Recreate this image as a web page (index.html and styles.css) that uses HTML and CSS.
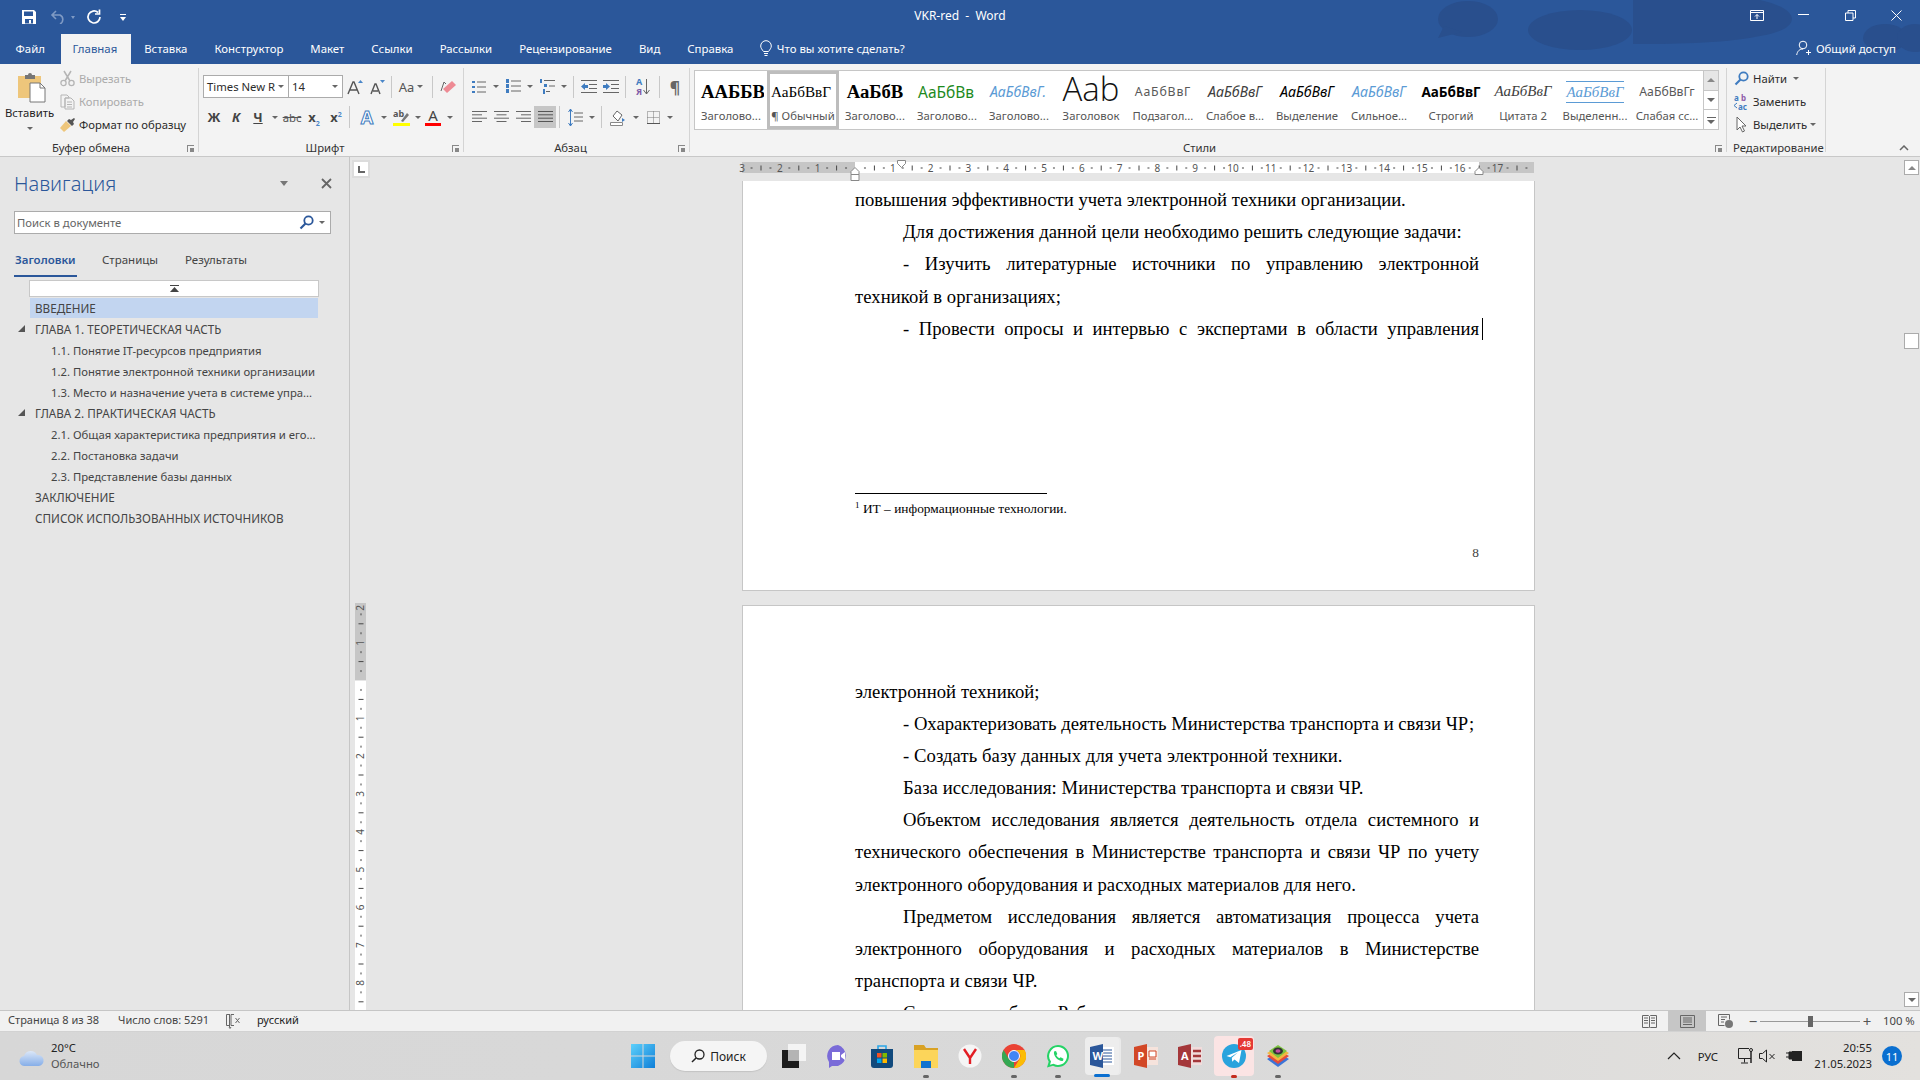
FILE: index.html
```html
<!DOCTYPE html>
<html lang="ru">
<head>
<meta charset="utf-8">
<title>VKR-red - Word</title>
<link rel="stylesheet" href="styles.css">
</head>
<body>
<div class="app">
  <header class="header">
    <svg class="art" width="500" height="54" viewBox="0 0 500 54"><g fill="#294f8d"><ellipse cx="48" cy="19" rx="30" ry="18"/><path d="M24 26l-6 12 24-6z"/><ellipse cx="160" cy="30" rx="52" ry="20"/><path d="M213 0H340C385 10 380 30 340 36 300 44 250 44 213 44z"/><ellipse cx="465" cy="38" rx="22" ry="14"/><ellipse cx="495" cy="38" rx="18" ry="14"/></g></svg>
    <div class="titlebar">
      <div class="qat">
        <svg class="q-save" width="16" height="16" viewBox="0 0 16 16"><path d="M1 1h12l2 2v12H1z" fill="#fff"/><path d="M3 2.500h9v4.500H3zM4 10h8v4.500H4z" fill="#2b579a"/><path d="M8 11h2v3.500H8z" fill="#fff"/></svg>
        <svg class="q-undo" width="18" height="14" viewBox="0 0 18 14"><path d="M6 1L2 5l4 4M2 5h8a5 5 0 0 1 0 9" fill="none" stroke="#7f9ac4" stroke-width="1.6"/></svg>
        <span class="q-dd"></span>
        <svg class="q-redo" width="16" height="16" viewBox="0 0 16 16"><path d="M12 3.500A6 6 0 1 0 14 8M13.500 .5v4.500H9" fill="none" stroke="#fff" stroke-width="1.700"/></svg>
        <svg class="q-cust" width="8" height="9" viewBox="0 0 8 9"><path d="M1 1h6v1H1z" fill="#fff"/><path d="M1 4h6L4 8z" fill="#fff"/></svg>
      </div>
      <div class="doc-title">VKR-red&nbsp; -&nbsp; Word</div>
      <div class="winctl">
        <span class="wc"><svg width="14" height="11" viewBox="0 0 14 11"><path d="M.5.500h13v10H.5zM.5 2.500h13M7 9V4.500M5 6.500l2-2 2 2" fill="none" stroke="#fff"/></svg></span>
        <span class="wc"><svg width="11" height="2" viewBox="0 0 11 2"><path d="M0 .5h11" stroke="#fff"/></svg></span>
        <span class="wc"><svg width="11" height="11" viewBox="0 0 11 11"><path d="M.5 3h7.500v7.500H.5zM3 3V.5h7.500V8H8" fill="none" stroke="#fff"/></svg></span>
        <span class="wc"><svg width="11" height="11" viewBox="0 0 11 11"><path d="M.5.500l10 10M10.500.500l-10 10" stroke="#fff"/></svg></span>
      </div>
    </div>
    <nav class="tabs">
      <span class="tab">Файл</span>
      <span class="tab tab-on">Главная</span>
      <span class="tab">Вставка</span>
      <span class="tab">Конструктор</span>
      <span class="tab">Макет</span>
      <span class="tab">Ссылки</span>
      <span class="tab">Рассылки</span>
      <span class="tab">Рецензирование</span>
      <span class="tab">Вид</span>
      <span class="tab">Справка</span>
      <span class="tell">
        <svg width="12" height="17" viewBox="0 0 12 17"><path d="M3.500 11.500C2 9.500.7 8 .7 6a5.300 5.300 0 0 1 10.600 0c0 2-1.300 3.500-2.800 5.500zM4 13.500h4M4.500 15.500h3" fill="none" stroke="#fff"/></svg>
        Что вы хотите сделать?
      </span>
      <span class="share">
        <svg width="16" height="16" viewBox="0 0 16 16"><circle cx="7" cy="5" r="3.800" fill="none" stroke="#fff"/><path d="M.7 15c.6-4 3-6 6.300-6M12.500 10v5M10 12.500h5" fill="none" stroke="#fff"/></svg>
        Общий доступ
      </span>
    </nav>
  </header>

  <section class="ribbon">
    <div class="group g-clip">
      <div class="g-body clip-body">
        <div class="paste">
          <svg width="30" height="31" viewBox="0 0 30 31"><path d="M1 4h23v22H1z" fill="#eec67b"/><path d="M8 3h3a2 2 0 0 1 4 0h3v4H8z" fill="#767676"/><path d="M13 11h10l5 5v14H13z" fill="#fff" stroke="#767676"/><path d="M23 11v5h5" fill="none" stroke="#767676"/></svg>
          <span class="paste-t">Вставить</span>
          <span class="dd"></span>
        </div>
        <div class="clip-cmds">
          <div class="cmd off"><svg width="15" height="17" viewBox="0 0 15 17"><circle cx="3.500" cy="13" r="2.600" fill="none" stroke="#b5b5b5" stroke-width="1.300"/><circle cx="11.500" cy="13" r="2.600" fill="none" stroke="#b5b5b5" stroke-width="1.300"/><path d="M5 11L11 1M10 11L4 1" stroke="#b5b5b5" stroke-width="1.500"/></svg><span>Вырезать</span></div>
          <div class="cmd off"><svg width="15" height="16" viewBox="0 0 15 16"><path d="M1 1h6l2 2v1H5v9H1zM5 4h6l3 3v8H5zM7 8h5M7 10.500h5M7 13h5" fill="none" stroke="#b5b5b5"/></svg><span>Копировать</span></div>
          <div class="cmd"><svg width="17" height="16" viewBox="0 0 17 16"><path d="M7 4L1 11l4 4 7-6z" fill="#eec67b"/><path d="M8 4l2-2 2 1 3-2 1 1-2 3 1 2-2 2z" fill="#555"/></svg><span>Формат по образцу</span></div>
        </div>
      </div>
      <div class="g-label"><span>Буфер обмена</span><i class="launch"></i></div>
    </div>

    <div class="group g-font">
      <div class="g-body rows">
        <div class="row">
          <div class="fbox fname"><span>Times New R</span><span class="dd"></span></div>
          <div class="fbox fsize"><span>14</span><span class="dd"></span></div>
          <span class="cell first-grow"><svg width="20" height="16" viewBox="0 0 20 16"><path d="M1 15L6 3h1l5 12M3 11h7" fill="none" stroke="#555" stroke-width="1.400"/><path d="M11 4l2.500-3L16 4z" fill="#4a86c8"/></svg></span>
          <span class="cell"><svg width="20" height="16" viewBox="0 0 20 16"><path d="M2 15L6 5h1l4 10M4 12h5" fill="none" stroke="#555" stroke-width="1.400"/><path d="M11 1l2.500 3L16 1z" fill="#4a86c8"/></svg></span>
          <i class="sep sep-a"></i>
          <span class="cell wide"><span class="aa">Аа</span><span class="dd"></span></span>
          <i class="sep"></i>
          <span class="cell"><svg width="17" height="16" viewBox="0 0 17 16"><path d="M7 14l9-8-4-4-9 8z" fill="#ee8a94"/><path d="M1 12l3-9 2 2" fill="none" stroke="#666"/></svg></span>
        </div>
        <div class="row row2">
          <span class="cell bi">Ж</span>
          <span class="cell bi it">К</span>
          <span class="cell bi"><span class="un">Ч</span></span><span class="dd box"></span>
          <span class="cell abc">abc</span>
          <span class="cell bi sc"><span>x<sub>2</sub></span></span>
          <span class="cell bi sc"><span>x<sup>2</sup></span></span>
          <i class="sep sep-r2"></i>
          <span class="cell"><span class="a-blue">A</span></span><span class="dd box"></span>
          <span class="cell"><svg width="17" height="17" viewBox="0 0 17 17"><text x="0" y="8" class="hl-t">ab</text><path d="M8 12l6-8 2 2-6 7z" fill="#777"/><path d="M0 14h17v3H0z" fill="#ff0"/></svg></span><span class="dd box"></span>
          <span class="cell red-cell"><span class="a-red">A</span></span><span class="dd box"></span>
        </div>
      </div>
      <div class="g-label"><span>Шрифт</span><i class="launch"></i></div>
    </div>

    <div class="group g-para">
      <div class="g-body rows">
        <div class="row">
          <span class="cell"><svg width="14" height="14" viewBox="0 0 14 14"><path d="M0 1h3v2H0zM0 6h3v2H0zM0 11h3v2H0z" fill="#3f7cc0"/><path d="M5 2h9M5 7h9M5 12h9" stroke="#666"/></svg></span><span class="dd box"></span>
          <span class="cell"><svg width="15" height="15" viewBox="0 0 15 15"><path d="M5 2h10M5 7h10M5 12h10" stroke="#666"/><path d="M0 0h3v4H0zM0 5h3v4H0zM0 10h3v4H0z" fill="#3f7cc0"/></svg></span><span class="dd box"></span>
          <span class="cell"><svg width="16" height="15" viewBox="0 0 16 15"><path d="M5 1.500h11M10 7h6M7 12.500h4" stroke="#666"/><path d="M1 0h2v4H1zM5 5h3v3H5zM4 10h2v5H4z" fill="#3f7cc0"/></svg></span><span class="dd box"></span>
          <i class="sep"></i>
          <span class="cell"><svg width="16" height="13" viewBox="0 0 16 13"><path d="M0 .5h16M8 4.500h8M8 8.500h8M0 12.500h16" stroke="#666"/><path d="M0 6.500l4-3.500v2h3v3H4v2z" fill="#3f7cc0"/></svg></span>
          <span class="cell"><svg width="16" height="13" viewBox="0 0 16 13"><path d="M0 .5h16M8 4.500h8M8 8.500h8M0 12.500h16" stroke="#666"/><path d="M7 6.500l-4-3.500v2H0v3h3v2z" fill="#3f7cc0"/></svg></span>
          <i class="sep"></i>
          <span class="cell sorticon"><span class="az"><b class="s-a">А</b><b class="s-z">Я</b></span><svg width="7" height="16" viewBox="0 0 7 16"><path d="M3.500 0v15M.5 11l3 4 3-4" fill="none" stroke="#666"/></svg></span>
          <i class="sep"></i>
          <span class="cell pil">¶</span>
        </div>
        <div class="row row2 para2">
          <span class="cell"><svg width="15" height="12" viewBox="0 0 15 12"><path d="M0 .5h15M0 3.800h10M0 7.200h15M0 10.500h10" stroke="#666"/></svg></span>
          <span class="cell"><svg width="15" height="12" viewBox="0 0 15 12"><path d="M0 .5h15M2.500 3.800h10M0 7.200h15M2.500 10.500h10" stroke="#666"/></svg></span>
          <span class="cell"><svg width="15" height="12" viewBox="0 0 15 12"><path d="M0 .5h15M5 3.800h10M0 7.200h15M5 10.500h10" stroke="#666"/></svg></span>
          <span class="cell just"><svg width="15" height="12" viewBox="0 0 15 12"><path d="M0 .5h15M0 3.800h15M0 7.200h15M0 10.500h15" stroke="#555"/></svg></span>
          <i class="sep"></i>
          <span class="cell"><svg width="15" height="17" viewBox="0 0 15 17"><path d="M2.500 0v17M.5 3l2-3 2 3M.5 14l2 3 2-3" fill="none" stroke="#3f7cc0"/><path d="M6 4h9M6 8h9M6 12h9" stroke="#666"/></svg></span><span class="dd box"></span>
          <i class="sep"></i>
          <span class="cell w24"><svg width="16" height="17" viewBox="0 0 16 17"><path d="M3 7l4-5 5 4-4 6z" fill="#fff" stroke="#666"/><path d="M12 9l3 2-3 2z" fill="#3f7cc0"/><path d="M.5 13.500h12v3H.5z" fill="#fff" stroke="#888"/></svg></span><span class="dd box"></span>
          <span class="cell"><svg width="13" height="13" viewBox="0 0 13 13"><path d="M.5.500h12v12H.5zM6.500.500v12M.5 6.500h12" fill="none" stroke="#777" stroke-dasharray="1 1"/><path d="M0 12.500h13" stroke="#555"/></svg></span><span class="dd box"></span>
        </div>
      </div>
      <div class="g-label"><span>Абзац</span><i class="launch"></i></div>
    </div>

    <div class="group g-styles">
      <div class="g-body">
        <div class="gallery">
          <div class="st"><div class="pv p1">ААББВ</div><div class="cap">Заголово...</div></div>
          <div class="st st-on"><div class="pv p2">АаБбВвГ</div><div class="cap">¶ Обычный</div></div>
          <div class="st"><div class="pv p3">АаБбВ</div><div class="cap">Заголово...</div></div>
          <div class="st"><div class="pv p4">АаБбВв</div><div class="cap">Заголово...</div></div>
          <div class="st"><div class="pv p5">АаБбВвГ.</div><div class="cap">Заголово...</div></div>
          <div class="st"><div class="pv p6">Ааb</div><div class="cap">Заголовок</div></div>
          <div class="st"><div class="pv p7">АаБбВвГ</div><div class="cap">Подзагол...</div></div>
          <div class="st"><div class="pv p8">АаБбВвГ</div><div class="cap">Слабое в...</div></div>
          <div class="st"><div class="pv p9">АаБбВвГ</div><div class="cap">Выделение</div></div>
          <div class="st"><div class="pv p10">АаБбВвГ</div><div class="cap">Сильное...</div></div>
          <div class="st"><div class="pv p11">АаБбВвГ</div><div class="cap">Строгий</div></div>
          <div class="st"><div class="pv p12">АаБбВвГ</div><div class="cap">Цитата 2</div></div>
          <div class="st"><div class="pv p13"><span>АаБбВвГ</span></div><div class="cap">Выделенн...</div></div>
          <div class="st"><div class="pv p14">АаБбВвГг</div><div class="cap">Слабая сс...</div></div>
          <div class="gal-scroll">
            <span class="gs gs-up"><i class="tri-up"></i></span>
            <span class="gs"><i class="tri-dn"></i></span>
            <span class="gs"><i class="more"></i></span>
          </div>
        </div>
      </div>
      <div class="g-label"><span>Стили</span><i class="launch"></i></div>
    </div>

    <div class="group g-edit">
      <div class="g-body edit-cmds">
        <div class="cmd"><svg width="15" height="15" viewBox="0 0 15 15"><circle cx="9.500" cy="5.500" r="4.200" fill="none" stroke="#3f7cc0" stroke-width="1.800"/><path d="M6.500 8.500l-5 5" stroke="#3f7cc0" stroke-width="2.200"/></svg><span>Найти</span><span class="dd after"></span></div>
        <div class="cmd"><svg width="17" height="18" viewBox="0 0 17 18"><text x="1" y="8" class="sub-a">a</text><text x="8" y="8" class="sub-b">b</text><text x="5" y="17" class="sub-c">ac</text><path d="M4 10l-3 2.500L4 15" fill="none" stroke="#3f7cc0"/></svg><span>Заменить</span></div>
        <div class="cmd"><svg width="15" height="17" viewBox="0 0 15 17"><path d="M3 1v13l3-3 2.500 5 2-1-2.500-5h4z" fill="#fff" stroke="#666"/></svg><span>Выделить</span><span class="dd"></span></div>
      </div>
      <div class="g-label"><span>Редактирование</span></div>
    </div>
    <div class="collapse"><svg width="10" height="6" viewBox="0 0 10 6"><path d="M1 5l4-4 4 4" fill="none" stroke="#666" stroke-width="1.500"/></svg></div>
  </section>

  <main class="main">
    <aside class="nav">
      <div class="nav-head">
        <span class="nav-title">Навигация</span>
        <i class="nav-dd"></i>
        <svg class="nav-x" width="11" height="11" viewBox="0 0 11 11"><path d="M1 1l9 9M10 1l-9 9" stroke="#666" stroke-width="1.800"/></svg>
      </div>
      <div class="nav-search">
        <span>Поиск в документе</span>
        <svg width="15" height="15" viewBox="0 0 15 15"><circle cx="9.500" cy="5.500" r="4.200" fill="none" stroke="#2b579a" stroke-width="1.800"/><path d="M6.500 8.500l-5 5" stroke="#2b579a" stroke-width="2.200"/></svg>
        <span class="dd"></span>
      </div>
      <div class="nav-tabs">
        <span class="ntab ntab-on">Заголовки</span>
        <span class="ntab">Страницы</span>
        <span class="ntab">Результаты</span>
      </div>
      <div class="tree">
        <div class="tree-top"><svg width="9" height="7" viewBox="0 0 9 7"><path d="M0 .5h9" stroke="#444"/><path d="M4.500 2L9 7H0z" fill="#444"/></svg></div>
        <div class="tr tr-sel">ВВЕДЕНИЕ</div>
        <div class="tr tr-exp">ГЛАВА 1. ТЕОРЕТИЧЕСКАЯ ЧАСТЬ</div>
        <div class="tr l2">1.1. Понятие IT-ресурсов предприятия</div>
        <div class="tr l2">1.2. Понятие электронной техники организации</div>
        <div class="tr l2">1.3. Место и назначение учета в системе упра...</div>
        <div class="tr tr-exp">ГЛАВА 2. ПРАКТИЧЕСКАЯ ЧАСТЬ</div>
        <div class="tr l2">2.1. Общая характеристика предприятия и его...</div>
        <div class="tr l2">2.2. Постановка задачи</div>
        <div class="tr l2">2.3. Представление базы данных</div>
        <div class="tr">ЗАКЛЮЧЕНИЕ</div>
        <div class="tr">СПИСОК ИСПОЛЬЗОВАННЫХ ИСТОЧНИКОВ</div>
      </div>
    </aside>

    <section class="docarea">
      <div class="vcol">
        <div class="tabsel"><svg width="7" height="7" viewBox="0 0 7 7"><path d="M1 0v6h6" fill="none" stroke="#666" stroke-width="2"/></svg></div>
        <svg class="vruler" width="11" height="407" viewBox="0 0 11 407">
          <defs><pattern id="vt" width="11" height="37.800" patternUnits="userSpaceOnUse" patternTransform="translate(0 77)"><rect x="5" y="9.450" width="2" height="1" fill="#444"/><rect x="3.500" y="18.900" width="5" height="1" fill="#444"/><rect x="5" y="28.350" width="2" height="1" fill="#444"/></pattern></defs>
          <rect width="11" height="77" fill="#c6c6c6"/><rect y="78" width="11" height="329" fill="#fff"/><rect width="11" height="407" fill="url(#vt)"/>
          <g class="rnum">
            <text transform="translate(9 5) rotate(-90)">2</text><text transform="translate(9 39.800) rotate(-90)">1</text>
            <text transform="translate(9 115.400) rotate(-90)">1</text><text transform="translate(9 153.200) rotate(-90)">2</text><text transform="translate(9 191) rotate(-90)">3</text><text transform="translate(9 228.800) rotate(-90)">4</text><text transform="translate(9 266.600) rotate(-90)">5</text><text transform="translate(9 304.400) rotate(-90)">6</text><text transform="translate(9 342.200) rotate(-90)">7</text><text transform="translate(9 380) rotate(-90)">8</text>
          </g>
        </svg>
      </div>
      <div class="pagecol">
        <svg class="hruler" width="792" height="24" viewBox="0 0 792 24">
          <defs><pattern id="ht" width="37.800" height="24" patternUnits="userSpaceOnUse" patternTransform="translate(113 0)"><rect x="9.450" y="10" width="1" height="2" fill="#444"/><rect x="18.900" y="8.500" width="1" height="5" fill="#444"/><rect x="28.350" y="10" width="1" height="2" fill="#444"/></pattern></defs>
          <rect y="5" width="792" height="11" fill="#c6c6c6"/><rect x="113" y="5" width="624" height="11" fill="#fff"/><rect y="5" width="792" height="11" fill="url(#ht)"/>
          <g class="rnum mid">
            <text x="0" y="15">3</text><text x="37.800" y="15">2</text><text x="75.600" y="15">1</text>
            <text x="150.800" y="15">1</text><text x="188.600" y="15">2</text><text x="226.400" y="15">3</text><text x="264.200" y="15">4</text><text x="302" y="15">5</text><text x="339.800" y="15">6</text><text x="377.600" y="15">7</text><text x="415.400" y="15">8</text><text x="453.200" y="15">9</text><text x="491" y="15">10</text><text x="528.800" y="15">11</text><text x="566.600" y="15">12</text><text x="604.400" y="15">13</text><text x="642.200" y="15">14</text><text x="680" y="15">15</text><text x="717.800" y="15">16</text><text x="755.600" y="15">17</text>
          </g>
          <path d="M155.500 3.500h8v3l-4 4-4-4z" fill="#fff" stroke="#888"/>
          <path d="M109 17.500v-3l4-4 4 4v3zM109 17.500h8v6h-8z" fill="#fff" stroke="#888"/>
          <path d="M733 17.500v-3l4-4 4 4v3z" fill="#fff" stroke="#888"/>
        </svg>
        <div class="pages">
          <article class="page p-one">
            <p class="ln tight">повышения эффективности учета электронной техники организации.</p>
            <p class="ln ind">Для достижения данной цели необходимо решить следующие задачи:</p>
            <p class="ln ind jst">- Изучить литературные источники по управлению электронной</p>
            <p class="ln">техникой в организациях;</p>
            <p class="ln ind jst caret-line">- Провести опросы и интервью с экспертами в области управления<i class="caret"></i></p>
            <div class="fn-rule"></div>
            <p class="fn"><sup>1</sup> ИТ – информационные технологии.</p>
            <p class="pnum">8</p>
          </article>
          <article class="page p-two">
            <p class="ln">электронной техникой;</p>
            <p class="ln ind tight">- Охарактеризовать деятельность Министерства транспорта и связи ЧР;</p>
            <p class="ln ind">- Создать базу данных для учета электронной техники.</p>
            <p class="ln ind">База исследования: Министерства транспорта и связи ЧР.</p>
            <p class="ln ind jst">Объектом исследования является деятельность отдела системного и</p>
            <p class="ln jst">технического обеспечения в Министерстве транспорта и связи ЧР по учету</p>
            <p class="ln">электронного оборудования и расходных материалов для него.</p>
            <p class="ln ind jst">Предметом исследования является автоматизация процесса учета</p>
            <p class="ln jst">электронного оборудования и расходных материалов в Министерстве</p>
            <p class="ln">транспорта и связи ЧР.</p>
            <p class="ln ind">Структура работы. Работа</p>
          </article>
        </div>
      </div>
      <div class="vscroll">
        <span class="sbtn"><i class="tri-up"></i></span>
        <span class="sthumb"></span>
        <span class="sbtn sbtn-end"><i class="tri-dn"></i></span>
      </div>
    </section>
  </main>

  <footer class="status">
    <span class="s1">Страница 8 из 38</span>
    <span class="s2">Число слов: 5291</span>
    <svg class="s3" width="14" height="16" viewBox="0 0 14 16"><path d="M.5 1.500h3M.5 1.500v11h3M8 1.500H5v11h3M3.500 1v13M5 14l-1 1.500L3 14" fill="none" stroke="#666"/><path d="M9.500 5l4 5M13.500 5l-4 5" stroke="#666"/></svg>
    <span class="s4">русский</span>
    <div class="s-right">
      <span class="view"><svg width="15" height="13" viewBox="0 0 15 13"><path d="M.5.500h6l1 1 1-1h6v12h-6l-1-.5-1 .5h-6zM2 3h4M2 5.500h4M2 8h4M9 3h4M9 5.500h4M9 8h4M7.500 1.500v11" fill="none" stroke="#666"/></svg></span>
      <span class="view view-on"><svg width="15" height="13" viewBox="0 0 15 13"><path d="M.5.500h14v12H.5zM3 3h9M3 5h9M3 7h9M3 9.500h9" fill="none" stroke="#666"/></svg></span>
      <span class="view"><svg width="15" height="14" viewBox="0 0 15 14"><path d="M.5.500h11v5M.5.500v11h6M3 3h6M3 5.500h4M3 8h3" fill="none" stroke="#666"/><circle cx="11" cy="10" r="4" fill="#777"/></svg></span>
      <span class="zm">−</span>
      <span class="slider"><i></i></span>
      <span class="zm">+</span>
      <span class="zpct">100 %</span>
    </div>
  </footer>

  <footer class="taskbar">
    <div class="weather">
      <svg width="26" height="20" viewBox="0 0 26 20"><defs><linearGradient id="cl" x1="0" y1="0" x2="0" y2="1"><stop offset="0" stop-color="#dbe7f8"/><stop offset="1" stop-color="#86aee8"/></linearGradient></defs><path d="M6 19a5 5 0 0 1-1-10 7 7 0 0 1 13-1 5.500 5.500 0 0 1 2 11z" fill="url(#cl)"/></svg>
      <div class="w-text"><span class="w-t">20°C</span><span class="w-d">Облачно</span></div>
    </div>
    <div class="tb-start"><svg width="24" height="24" viewBox="0 0 24 24"><defs><linearGradient id="w1" x1="0" y1="0" x2="1" y2="1"><stop offset="0" stop-color="#5dd0fb"/><stop offset="1" stop-color="#0f7fd8"/></linearGradient></defs><path d="M0 0h11.500v11.500H0zM12.500 0H24v11.500H12.500zM0 12.500h11.500V24H0zM12.500 12.500H24V24H12.500z" fill="url(#w1)"/></svg></div>
    <div class="tb-search"><svg width="14" height="14" viewBox="0 0 14 14"><circle cx="8.500" cy="5.500" r="4.500" fill="none" stroke="#222" stroke-width="1.300"/><path d="M5.300 8.700L1 13" stroke="#222" stroke-width="1.500"/></svg><span>Поиск</span></div>
    <div class="tb-apps">
      <span class="ti"><svg width="24" height="24" viewBox="0 0 24 24"><path d="M0 6h17v18H0z" fill="#1c1c1c"/><path d="M6 0h18v17H6z" fill="#f4f4f4"/><path d="M6 6h11v11H6z" fill="#b4b4b4"/></svg></span>
      <span class="ti"><svg width="24" height="24" viewBox="0 0 24 24"><path d="M12 1a11 11 0 0 1 0 21H6l-3 2v-6A11 11 0 0 1 12 1z" fill="#7a6bd8"/><path d="M6 8h8v8H6zM15 11l4-3v8l-4-3z" fill="#fff"/></svg></span>
      <span class="ti"><svg width="24" height="25" viewBox="0 0 24 25"><path d="M8 6V2h8v4" fill="none" stroke="#2ba7e8" stroke-width="1.600"/><path d="M1 5h22v16a3 3 0 0 1-3 3H4a3 3 0 0 1-3-3z" fill="#114a7d"/><path d="M7 9h4.500v4.500H7z" fill="#f25022"/><path d="M12.500 9H17v4.500h-4.500z" fill="#7fba00"/><path d="M7 14.500h4.500V19H7z" fill="#00a4ef"/><path d="M12.500 14.500H17V19h-4.500z" fill="#ffb900"/></svg></span>
      <span class="ti"><svg width="24" height="24" viewBox="0 0 24 24"><path d="M0 1h10l2 3h12v20H0z" fill="#d9a224"/><path d="M0 6h24v18H0z" fill="#fcd55a"/><path d="M7 17h10v7H7z" fill="#1173cf"/></svg><b class="dot"></b></span>
      <span class="ti"><svg width="24" height="24" viewBox="0 0 24 24"><circle cx="12" cy="12" r="11.500" fill="#f5f5f5"/><path d="M6 5l6 9 6-9M12 13v7" fill="none" stroke="#e31e24" stroke-width="2.400"/></svg></span>
      <span class="ti"><svg width="24" height="24" viewBox="0 0 24 24"><circle cx="12" cy="12" r="12" fill="#ea4335"/><path d="M12 24A12 12 0 0 1 1.600 6L7 15a6 6 0 0 0 5 3z" fill="#34a853"/><path d="M12 6h10.500A12 12 0 0 1 12 24l5.500-9a6 6 0 0 0-5.500-9z" fill="#fbbc05"/><circle cx="12" cy="12" r="5.500" fill="#4285f4" stroke="#fff"/></svg><b class="dot"></b></span>
      <span class="ti"><svg width="24" height="24" viewBox="0 0 24 24"><path d="M12 1a11 11 0 0 1 0 22 11 11 0 0 1-5-1.200L1 23.500l1.700-5.800A11 11 0 0 1 12 1z" fill="#25d366"/><path d="M12 3a9 9 0 1 1-4.500 16.800l-3.500 1 1-3.400A9 9 0 0 1 12 3z" fill="#fff"/><path d="M8 7.500l2-.5 1.300 3-1 1.200a8 8 0 0 0 3 3l1.300-1 2.900 1.500-.5 2c-3.500 1.300-10-4-9-9.200z" fill="#25d366"/></svg><b class="dot"></b></span>
      <span class="ti ti-word"><svg width="24" height="24" viewBox="0 0 24 24"><path d="M8 3h16v18H8z" fill="#fff"/><path d="M12 6h10M12 9h10M12 12h10M12 15h10M12 18h10" stroke="#2b579a"/><path d="M0 3l13-3v24L0 21z" fill="#2b579a"/><text x="2.500" y="16" class="lg">W</text></svg><b class="bar"></b></span>
      <span class="ti"><svg width="24" height="24" viewBox="0 0 24 24"><path d="M8 3h16v18H8z" fill="#f6e3dc"/><path d="M15 7h7v6h-7zM15 15h7" stroke="#d24726" fill="#fff"/><path d="M0 3l13-3v24L0 21z" fill="#d24726"/><text x="3.500" y="16" class="lg">P</text></svg></span>
      <span class="ti"><svg width="24" height="24" viewBox="0 0 24 24"><path d="M8 3h16v18H8z" fill="#f1dcdc"/><path d="M15 7h8M15 12h8M15 17h8" stroke="#a4373a" stroke-width="2.500"/><path d="M0 3l13-3v24L0 21z" fill="#a4373a"/><text x="3" y="16" class="lg">A</text></svg></span>
      <span class="ti ti-tg"><svg width="24" height="24" viewBox="0 0 24 24"><circle cx="12" cy="12" r="12" fill="#2aa3dd"/><path d="M4.500 12l15-6-2.500 13-4.500-3.500-2.300 2.300-.4-4 6-5.300-7.500 4.700z" fill="#fff"/></svg><b class="badge">.48</b><b class="dot red"></b></span>
      <span class="ti"><svg width="24" height="24" viewBox="0 0 24 24"><path d="M1 15l11-6 11 6-11 8z" fill="#3c74d8"/><path d="M1 12l11-6 11 6-11 8z" fill="#e34c3c"/><path d="M1 9l11-6 11 6-11 8z" fill="#f4b63f"/><path d="M3 7l9-6 9 6-9 7z" fill="#7cc53f"/><ellipse cx="12" cy="7" rx="5" ry="3.500" fill="#333"/><ellipse cx="12" cy="7" rx="2.500" ry="1.800" fill="#c24ba0"/></svg><b class="dot"></b></span>
    </div>
    <div class="tray">
      <svg class="t-chev" width="14" height="8" viewBox="0 0 14 8"><path d="M1 7l6-6 6 6" fill="none" stroke="#222" stroke-width="1.200"/></svg>
      <span class="t-lang">РУС</span>
      <svg class="t-net" width="16" height="16" viewBox="0 0 16 16"><path d="M11 .5H.5v10H13M6.500 10.500v4M3 15h7" fill="none" stroke="#222"/><path d="M13 3v12" stroke="#222" stroke-width="1.500"/><circle cx="13" cy="2" r="1.500" fill="none" stroke="#222"/></svg>
      <svg class="t-vol" width="17" height="14" viewBox="0 0 17 14"><path d="M.5 4.500h3l4-3.500v12l-4-3.500h-3z" fill="none" stroke="#222"/><path d="M10.500 5l5 5M15.500 5l-5 5" stroke="#222"/></svg>
      <svg class="t-bat" width="17" height="12" viewBox="0 0 17 12"><path d="M6 1h10v10H6z" fill="#222"/><path d="M0 3h3M0 7h3M3 2h3v7H3z" stroke="#222" fill="#222"/></svg>
      <div class="clock"><span>20:55</span><span>21.05.2023</span></div>
      <span class="t-badge">11</span>
    </div>
  </footer>
</div>
</body>
</html>
```

FILE: styles.css
```css
* { box-sizing: border-box; }
html, body { margin: 0; padding: 0; }
body { font-family: "Noto Sans", "Open Sans", sans-serif; font-size: 11.3px; color: #2b2b2b; overflow: hidden; }
p { margin: 0; }
svg { display: block; flex: none; }
.app { width: 1920px; height: 1080px; display: flex; flex-direction: column; overflow: hidden; background: #e6e6e6; }

/* title */
.header { height: 64px; flex: none; background: #2b579a; color: #fff; position: relative; }
.art { position: absolute; right: 0; top: 0; }
.titlebar { height: 34px; display: grid; grid-template-columns: 1fr auto 1fr; align-items: center; position: relative; }
.qat { display: flex; align-items: center; padding-left: 21px; }
.q-undo { margin-left: 13px; }
.q-dd { width: 0; height: 0; border: 2.500px solid transparent; border-top: 3px solid #7f9ac4; border-bottom: 0; margin-left: 3px; }
.q-redo { margin-left: 11px; }
.q-cust { margin-left: 17px; }
.doc-title { font-size: 12px; padding-bottom: 3px; }
.winctl { display: flex; justify-content: flex-end; align-self: start; margin-right: 0; height: 30px; }
.wc { width: 46.500px; display: flex; align-items: center; justify-content: center; }
.tabs { height: 30px; display: flex; align-items: stretch; padding-left: 2px; font-size: 11.400px; position: relative; }
.tab { padding: 0 13.500px 2px; display: flex; align-items: center; }
.tab-on { background: #f3f3f3; color: #2b579a; margin-left: 3px; padding: 0 13.500px 2px 11px; }
.tell { display: flex; align-items: center; gap: 5px; margin-left: 13px; padding-bottom: 2px; }
.share { display: flex; align-items: center; gap: 4px; margin-left: auto; margin-right: 24px; padding-bottom: 2px; }

/* ribbon */
.ribbon { height: 93px; flex: none; background: #f3f3f3; display: flex; border-bottom: 1px solid #c8c8c8; position: relative; }
.group { display: flex; flex-direction: column; flex: none; margin-top: 4px; height: 84px; border-right: 1px solid #d4d4d4; }
.g-body { height: 71px; flex: none; }
.g-label { height: 17px; flex: none; display: flex; align-items: center; justify-content: center; padding-right: 16px; position: relative; font-size: 11.3px; color: #333; }
.launch { position: absolute; right: 4px; bottom: 4px; width: 7px; height: 7px; border-left: 1px solid #888; border-top: 1px solid #888; }
.launch::after { content: ""; position: absolute; right: 0; bottom: 0; width: 4px; height: 4px; background: #888; }
.g-clip { width: 199px; }
.clip-body { display: flex; }
.paste { width: 59px; display: flex; flex-direction: column; align-items: center; padding-top: 4px; }
.paste svg { margin-left: 4px; }
.paste-t { margin-top: 2px; color: #222; line-height: 16px; }
.paste .dd { margin-top: 6px; }
.clip-cmds { display: flex; flex-direction: column; margin-top: -1px; }
.cmd { height: 23px; flex: none; display: flex; align-items: center; gap: 3px; color: #2b2b2b; white-space: nowrap; }
.cmd svg { width: 17px; }
.cmd.off { color: #ababab; }
.dd { display: inline-block; width: 0; height: 0; flex: none; border: 3px solid transparent; border-top: 3px solid #666; border-bottom: 0; }
.dd.box { margin: 0 3px; }
.dd.after { margin-left: 3px; }

.g-font { width: 265px; padding-left: 4px; }
.rows { display: flex; flex-direction: column; padding-top: 7px; }
.row { display: flex; align-items: center; height: 23px; flex: none; }
.row2 { margin-top: 7px; height: 24px; }
.fbox { height: 23px; background: #fff; border: 1px solid #ababab; display: flex; align-items: center; justify-content: space-between; padding: 0 4px 0 3px; flex: none; }
.fname { width: 85px; border-right: 0; white-space: nowrap; overflow: hidden; }
.fsize { width: 55px; }
.cell { width: 22px; height: 22px; display: flex; align-items: center; justify-content: center; flex: none; font-size: 13px; color: #444; }
.cell.wide { width: 32px; gap: 3px; margin: 0 2px 0 -1px; }
.w24 { width: 24px; }
.aa { font-size: 13px; color: #555; }
.first-grow { margin-left: 3px; }
.sep { width: 1px; height: 22px; background: #c8c8c8; flex: none; margin: 0 4px 0 3px; }
.sep-a { margin-left: 1px; }
.sep-r2 { margin: 0 6px 0 2px; }
.bi { font-weight: 700; color: #444; }
.it { font-style: italic; }
.un { text-decoration: underline; }
.abc { font-size: 11.3px; color: #555; text-decoration: line-through; }
.sc sub, .sc sup { font-size: 7px; color: #4a86c8; line-height: 0; }
.a-blue { font-size: 18px; font-weight: 700; color: #fff; -webkit-text-stroke: 1px #3f7cc0; }
.a-red { font-size: 15px; color: #444; border-bottom: 3px solid #f00; line-height: 15px; padding: 0 3px; font-weight: 400; }
.red-cell { margin-left: -2px; }
.hl-t { font: 700 9px "Noto Sans", sans-serif; fill: #555; }

.g-para { width: 226px; padding-left: 4px; }
.sorticon { gap: 1px; width: 26px; }
.az { display: flex; flex-direction: column; font-size: 9px; line-height: 10px; }
.s-a { color: #3f7cc0; font-weight: 700; }
.s-z { color: #7f5aa8; font-weight: 700; }
.pil { font-size: 16px; color: #666; font-weight: 700; }
.just { background: #c6c6c6; }

.g-styles { width: 1037px; padding-left: 4px; }
.g-styles .g-label { padding-right: 21px; }
.gallery { height: 60px; width: 1025px; margin-top: 2px; display: flex; background: #fff; border: 1px solid #c6c6c6; }
.st { width: 72px; height: 58px; flex: none; display: flex; flex-direction: column; align-items: center; border: 3px solid transparent; overflow: hidden; }
.st-on { border-color: #bdbdbd; }
.pv { height: 32px; flex: none; width: 100%; display: flex; align-items: center; justify-content: center; overflow: hidden; white-space: nowrap; color: #000; padding-top: 3px; }
.cap { font-size: 11.3px; color: #555; line-height: 20px; white-space: nowrap; }
.p1 { font: 700 18.670px "Liberation Serif", serif; justify-content: flex-start; padding-left: 3px; }
.p2 { font: 400 15.200px "Liberation Serif", serif; justify-content: flex-start; padding-left: 1px; }
.p3 { font: 700 18.670px "Liberation Serif", serif; }
.p4 { font-size: 15.500px; color: #1e8a1e; justify-content: flex-start; padding-left: 4px; }
.p5 { font-size: 14px; font-style: italic; color: #5b9bd5; justify-content: flex-start; padding-left: 4px; }
.p6 { font-size: 33px; font-weight: 300; font-family: "Open Sans", "Noto Sans", sans-serif; line-height: 30px; padding: 1px 0 4px; color: #111; }
.p7 { font-size: 12.300px; letter-spacing: .8px; color: #595959; }
.p8 { font-size: 14.200px; font-style: italic; color: #404040; }
.p9 { font-size: 14.200px; font-style: italic; color: #000; }
.p10 { font-size: 14.200px; font-style: italic; color: #5b9bd5; }
.p11 { font-size: 13.500px; font-weight: 700; color: #000; }
.p12 { font: italic 400 15px "Liberation Serif", serif; color: #404040; }
.p13 { font: italic 400 15px "Liberation Serif", serif; color: #5b9bd5; }
.p13 span { border-top: 1px solid #5b9bd5; border-bottom: 1px solid #5b9bd5; padding: 3px 0; line-height: 14px; white-space: nowrap; }
.p14 { font-size: 12.200px; color: #595959; font-variant: small-caps; }
.gal-scroll { flex: none; width: 15px; margin-left: auto; display: flex; flex-direction: column; border-left: 1px solid #c6c6c6; }
.gs { flex: 1; display: flex; align-items: center; justify-content: center; border-bottom: 1px solid #c6c6c6; background: #fff; }
.gs:last-child { border-bottom: 0; }
.gs-up { background: #e6e6e6; }
.tri-up { width: 0; height: 0; border: 4px solid transparent; border-bottom: 4px solid #888; border-top: 0; }
.tri-dn { width: 0; height: 0; border: 4px solid transparent; border-top: 4px solid #666; border-bottom: 0; }
.more { width: 9px; height: 6px; border-top: 1px solid #666; position: relative; }
.more::after { content: ""; position: absolute; left: 0; top: 2px; border: 4px solid transparent; border-top: 4px solid #666; border-bottom: 0; }

.g-edit { width: 99px; padding-left: 6px; }
.edit-cmds { display: flex; flex-direction: column; padding-top: 0; margin-top: -1px; }
.g-edit .g-label { justify-content: flex-start; padding-right: 0; margin-top: 1px; }
.sub-a, .sub-b, .sub-c { font: 700 8px "Noto Sans", sans-serif; }
.sub-a { fill: #3f7cc0; } .sub-b { fill: #8e5aa8; } .sub-c { fill: #3f7cc0; }
.collapse { margin-left: auto; align-self: flex-end; margin-right: 11px; margin-bottom: 5px; }

/* main */
.main { height: 853px; flex: none; display: flex; overflow: hidden; }
.nav { width: 350px; flex: none; border-right: 1px solid #c6c6c6; padding-top: 11px; position: relative; }
.nav-head { display: flex; align-items: center; height: 30px; padding-left: 14px; }
.nav-title { font-size: 20px; font-weight: 300; color: #2b579a; }
.nav-dd { margin-left: auto; width: 0; height: 0; border: 4.500px solid transparent; border-top: 5px solid #777; border-bottom: 0; }
.nav-x { margin: 0 17px 0 33px; }
.nav-search { margin: 13px 0 0 14px; width: 317px; height: 23px; border: 1px solid #ababab; background: #fff; display: flex; align-items: center; gap: 5px; padding: 0 5px 0 2px; color: #666; }
.nav-search span:first-child { margin-right: auto; }
.nav-tabs { display: flex; margin: 13px 0 0 14px; height: 30px; }
.ntab { padding: 5px 0 0; width: 88px; color: #444; text-align: left; font-size: 11.500px; }
.ntab:nth-child(2) { width: 83px; }
.ntab-on { width: 63px; margin-right: 25px; padding-left: 1px; color: #2b579a; font-weight: 600; border-bottom: 2px solid #2b579a; }
.tree { margin: 3px 0 0 29px; width: 290px; }
.tree-top { height: 17px; background: #fff; border: 1px solid #c8c8c8; display: flex; align-items: center; justify-content: center; }
.tr { height: 21px; padding-left: 6px; line-height: 21px; font-size: 11.700px; color: #444; white-space: nowrap; position: relative; }
.tr-sel { background: #c2d5f0; margin: 1px; height: 20px; line-height: 20px; padding-left: 5px; }
.l2 { padding-left: 22px; font-size: 11.300px; }
.tr-exp::before { content: ""; position: absolute; left: -11px; top: 6px; border-left: 7px solid transparent; border-bottom: 7px solid #555; }

.docarea { flex: 1; display: flex; min-width: 0; }
.vcol { width: 392px; flex: none; padding: 5px 0 0 4px; display: flex; flex-direction: column; }
.tabsel { width: 14px; height: 14px; background: #fff; box-shadow: 0 0 0 2px #dcdcdc; display: flex; align-items: center; justify-content: center; }
.vruler { margin: 427px 0 0 1px; }
.rnum text { font: 10px "Noto Sans", sans-serif; fill: #555; text-anchor: middle; }
.pagecol { width: 793px; flex: none; display: flex; flex-direction: column; overflow: visible; }
.hruler { flex: none; overflow: visible; }
.pages { display: flex; flex-direction: column; gap: 14px; height: 829px; overflow: hidden; }
.page { background: #fff; border: 1px solid #c6c6c6; padding: 0 55px 0 112px; font: 18.670px/32.200px "Liberation Serif", serif; color: #000; flex: none; display: flex; flex-direction: column; }
.p-one { height: 410px; border-top: 0; padding-top: 3px; }
.p-two { height: 500px; padding-top: 69.500px; }
.ln { height: 32.200px; white-space: nowrap; letter-spacing: .07px; }
.tight { letter-spacing: 0; }
.ind { text-indent: 48px; }
.jst { white-space: normal; text-align: justify; text-align-last: justify; letter-spacing: 0; }
.caret-line { position: relative; }
.caret { position: absolute; right: -4px; top: 5px; width: 1px; height: 22px; background: #000; }
.fn-rule { width: 192px; height: 1px; background: #000; margin-top: 148.500px; flex: none; }
.fn { font-size: 13.330px; line-height: 18px; margin-top: 5.500px; letter-spacing: .03px; }
.fn sup { font-size: 9px; line-height: 0; }
.pnum { font-size: 13.330px; line-height: 18px; text-align: right; color: #444; margin-top: 26px; }
.vscroll { flex: 1; display: flex; flex-direction: column; align-items: flex-end; padding: 3px 1px 3px 0; position: relative; }
.sbtn { width: 15px; height: 15px; background: #fff; border: 1px solid #ababab; display: flex; align-items: center; justify-content: center; }
.sthumb { width: 15px; height: 16px; background: #fff; border: 1px solid #ababab; margin-top: 158px; }
.sbtn-end { margin-top: auto; }

/* status */
.status { height: 22px; flex: none; background: #f1f1f1; border-top: 1px solid #c6c6c6; border-bottom: 1px solid #d2d2d2; display: flex; align-items: center; font-size: 11px; color: #444; line-height: 16px; }
.s1 { margin-left: 8px; width: 110px; padding-bottom: 2px; }
.s2 { width: 108px; padding-bottom: 2px; }
.s4 { margin-left: 17px; color: #222; padding-bottom: 2px; }
.s-right { margin-left: auto; display: flex; align-items: center; height: 100%; }
.view { width: 38px; height: 100%; display: flex; align-items: center; justify-content: center; }
.view-on { background: #c6c6c6; }
.zm { width: 14px; text-align: center; font-size: 15px; line-height: 16px; color: #555; margin-left: 2px; }
.slider { width: 100px; height: 1px; background: #999; position: relative; }
.slider + .zm { margin-left: 0; }
.slider i { position: absolute; left: 48px; top: -5px; width: 5px; height: 11px; background: #666; }
.zpct { width: 37px; margin-left: 9px; font-size: 11.300px; white-space: nowrap; }

/* taskbar */
.taskbar { height: 48px; flex: none; background: linear-gradient(90deg, #d7d7d7, #d9d9d9 60%, #e3e1de); display: flex; align-items: center; }
.weather { width: 621px; flex: none; display: flex; align-items: center; padding-left: 19px; gap: 6px; }
.weather svg { margin-top: 2px; }
.w-text { display: flex; flex-direction: column; line-height: 16px; font-size: 11.300px; }
.w-t { color: #222; }
.w-d { color: #555; }
.tb-start { width: 44px; display: flex; justify-content: center; flex: none; }
.tb-search { margin-left: 5px; width: 97px; height: 30px; background: #f5f5f5; border-radius: 15px; display: flex; align-items: center; justify-content: center; gap: 5px; font-size: 12px; color: #222; box-shadow: 0 1px 1px #c4c4c4; flex: none; }
.tb-apps { display: flex; margin-left: 5px; }
.ti { width: 44px; height: 40px; display: flex; align-items: center; justify-content: center; position: relative; border-radius: 4px; }
.ti-word::before { content: ""; position: absolute; left: 5px; right: 5px; top: 1px; bottom: 1px; background: #ededed; border-radius: 4px; box-shadow: 2px 0 0 #eaeaea; }
.ti-word svg { position: relative; }
.ti-tg::before { content: ""; position: absolute; left: 2px; right: 2px; top: 0; bottom: 0; background: #fbe4e4; border-radius: 4px; }
.ti-tg svg { position: relative; }
.dot { position: absolute; left: 19px; bottom: -2px; width: 6px; height: 3px; background: #666; border-radius: 2px; }
.dot.red { background: #c42b1c; }
.bar { position: absolute; left: 14px; bottom: -1px; width: 16px; height: 3px; background: #0a6fd0; border-radius: 2px; }
.badge { position: absolute; right: 3px; top: 2px; background: #e53935; color: #fff; font-size: 8px; font-weight: 600; padding: 1px 2px; line-height: 10px; border-radius: 2px; }
.lg { font: 700 11px "Noto Sans", sans-serif; fill: #fff; }
.tray { margin-left: auto; display: flex; align-items: center; padding-right: 18px; }
.t-lang { font-size: 11.300px; margin-left: 17px; color: #222; }
.t-net { margin-left: 20px; }
.t-vol { margin-left: 5px; }
.t-bat { margin-left: 10px; }
.clock { width: 62px; margin-left: 7px; display: flex; flex-direction: column; align-items: flex-end; font-size: 11.300px; line-height: 16px; color: #222; }
.t-badge { width: 20px; height: 20px; border-radius: 50%; background: #0a6fd0; color: #fff; font-size: 11px; display: flex; align-items: center; justify-content: center; margin-left: 10px; }
```
